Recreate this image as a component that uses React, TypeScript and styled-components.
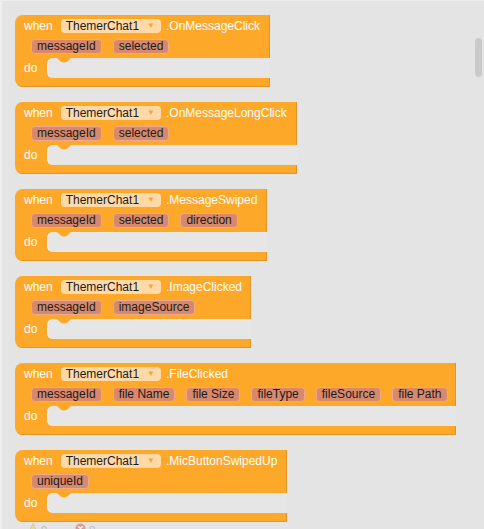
import React from "react";
import styled, { createGlobalStyle } from "styled-components";

const Global = createGlobalStyle`
  html, body { margin: 0; padding: 0; background: #e4e4e4; overflow: hidden; }
  body { font-family: "Liberation Sans", Arial, sans-serif; font-size: 12px; }
`;

const ORANGE = "#fea829";
const ORANGE_DARK = "#e39420";

const Workspace = styled.div`
  position: relative;
  width: 484px;
  height: 529px;
  box-sizing: border-box;
  border-left: 2px solid #eeeeee;
  border-top: 1px solid #ededed;
  padding: 14px 0 0 13px;
  display: flex;
  flex-direction: column;
  gap: 15px;
  background: #e4e4e4;
  overflow: hidden;
`;

const Block = styled.div<{ $w: number }>`
  width: ${(p) => p.$w}px;
  display: flex;
  flex-direction: column;
  color: #ffffff;
`;

const Top = styled.div`
  background: ${ORANGE};
  border-radius: 8px 0 0 0;
  box-shadow: inset -1px 0 0 ${ORANGE_DARK};
`;

const HeaderRow = styled.div`
  display: flex;
  align-items: center;
  height: 22px;
  padding: 0 0 0 9px;
  box-sizing: border-box;
  white-space: nowrap;
`;

const Label = styled.span<{ $ml?: number }>`
  margin-left: ${(p) => p.$ml ?? 0}px;
  line-height: 14px;
`;

const Dropdown = styled.span`
  margin-left: 8px;
  display: inline-flex;
  align-items: center;
  height: 14px;
  padding: 0 6px 0 5px;
  background: #ffdaa8;
  border-radius: 4px;
  color: #1b1b1b;
  line-height: 14px;
`;

const Arrow = styled.span`
  margin-left: 8px;
  font-size: 8px;
  color: #f3a540;
  line-height: 14px;
`;

const ParamRow = styled.div`
  display: flex;
  align-items: center;
  gap: 11px;
  padding: 2px 0 4px 16px;
  white-space: nowrap;
`;

const Param = styled.span`
  display: inline-flex;
  align-items: center;
  height: 15px;
  box-sizing: border-box;
  padding: 0 5px;
  background: #d8896b;
  border: 1px solid #eca98b;
  border-radius: 4px;
  color: #1b1b1b;
  line-height: 13px;
`;

const DoRow = styled.div`
  display: flex;
  height: 20px;
  background: ${ORANGE};
`;

const DoLabel = styled.span`
  width: 32px;
  box-sizing: border-box;
  padding-left: 9px;
  line-height: 20px;
`;

const Slot = styled.div`
  position: relative;
  flex: 1;
  background: #e6e6e6;
  border-radius: 6px 0 0 6px;
  box-shadow: inset 1px 0 0 #eeeeee;
`;

const Notch = styled.svg`
  position: absolute;
  left: 9px;
  top: 0;
`;

const Bottom = styled.div`
  height: 9px;
  background: ${ORANGE};
  border-radius: 0 0 0 8px;
  box-shadow: inset -1px -1px 0 ${ORANGE_DARK};
`;

const Scroll = styled.div`
  position: absolute;
  left: 473px;
  top: 37px;
  width: 7px;
  height: 39px;
  border-radius: 4px;
  background: #cacaca;
`;

const Indicators = styled.div`
  position: absolute;
  left: 26px;
  top: 522px;
  display: flex;
  align-items: flex-start;
  gap: 3px;
  opacity: 0.45;
  color: #888;
  font-size: 11px;
`;

const Count = styled.span`
  margin-right: 25px;
  line-height: 14px;
`;

type BlockDef = { w: number; event: string; params: string[] };

const blocks: BlockDef[] = [
  { w: 255, event: ".OnMessageClick", params: ["messageId", "selected"] },
  { w: 282, event: ".OnMessageLongClick", params: ["messageId", "selected"] },
  { w: 252, event: ".MessageSwiped", params: ["messageId", "selected", "direction"] },
  { w: 236, event: ".ImageClicked", params: ["messageId", "imageSource"] },
  {
    w: 441,
    event: ".FileClicked",
    params: ["messageId", "file Name", "file Size", "fileType", "fileSource", "file Path"],
  },
  { w: 272, event: ".MicButtonSwipedUp", params: ["uniqueId"] },
];

function EventBlock({ def }: { def: BlockDef }) {
  return (
    <Block $w={def.w}>
      <Top>
        <HeaderRow>
          <Label>when</Label>
          <Dropdown>
            ThemerChat1<Arrow>▼</Arrow>
          </Dropdown>
          <Label $ml={5}>{def.event}</Label>
        </HeaderRow>
        <ParamRow>
          {def.params.map((p) => (
            <Param key={p}>{p}</Param>
          ))}
        </ParamRow>
      </Top>
      <DoRow>
        <DoLabel>do</DoLabel>
        <Slot>
          <Notch width="16" height="5" viewBox="0 0 16 5">
            <path d="M0 0 C3 0 3 4.5 8 4.5 C13 4.5 13 0 16 0 Z" fill={ORANGE} />
          </Notch>
        </Slot>
      </DoRow>
      <Bottom />
    </Block>
  );
}

export default function App() {
  return (
    <>
      <Global />
      <Workspace>
        {blocks.map((b) => (
          <EventBlock key={b.event} def={b} />
        ))}
        <Scroll />
        <Indicators>
          <svg width="10" height="10" viewBox="0 0 10 10">
            <path d="M5 0.5 L9.5 9.5 L0.5 9.5 Z" fill="#e8d24a" stroke="#b9a22a" strokeWidth="0.8" />
          </svg>
          <Count>0</Count>
          <svg width="11" height="11" viewBox="0 0 11 11">
            <circle cx="5.5" cy="5.5" r="5" fill="#d94040" />
            <path d="M3.2 3.2 L7.8 7.8 M7.8 3.2 L3.2 7.8" stroke="#fff" strokeWidth="1.4" />
          </svg>
          <Count>0</Count>
        </Indicators>
      </Workspace>
    </>
  );
}
